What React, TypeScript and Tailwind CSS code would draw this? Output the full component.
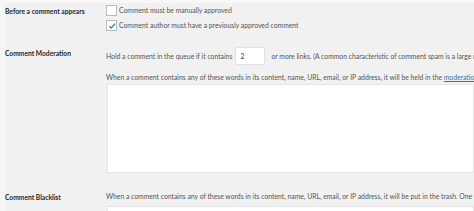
export default function App() {
  return (
    <div
      className="w-[474px] h-[211px] overflow-hidden bg-[#f1f1f1] text-[#555] text-[6.8px] border-t-[3px] border-[#f7f7f7]"
      style={{ fontFamily: 'Lato, "Open Sans", sans-serif' }}
    >
      <div className="flex h-full border-l-[5px] border-[#f6f6f6]">
        {/* label column */}
        <div className="w-[101px] shrink-0 flex flex-col text-[#23282d] font-bold whitespace-nowrap pt-[2px] text-[6.7px]">
          <div className="h-[12px] leading-[12px] shrink-0">Before a comment appears</div>
          <div className="h-[30px] shrink-0" />
          <div className="h-[12px] leading-[12px] shrink-0">Comment Moderation</div>
          <div className="h-[132px] shrink-0" />
          <div className="h-[12px] leading-[12px] shrink-0">Comment Blacklist</div>
        </div>

        {/* settings column */}
        <div className="flex-1 min-w-0 flex flex-col whitespace-nowrap">
          <label className="flex items-center h-[11px] mt-[2px] shrink-0">
            <span className="w-[11px] h-[11px] bg-white border border-[#bbb] shrink-0" />
            <span className="ml-[2px]">Comment must be manually approved</span>
          </label>
          <label className="flex items-center h-[11px] mt-[4px] shrink-0">
            <span className="w-[11px] h-[11px] bg-white border border-[#bbb] shrink-0 flex items-center justify-center">
              <svg viewBox="0 0 10 10" className="w-[8px] h-[8px]">
                <path d="M1.5 5.2 L4 7.6 L8.6 2.2" fill="none" stroke="#1e8cbe" strokeWidth="1.6" />
              </svg>
            </span>
            <span className="ml-[2px]">Comment author must have a previously approved comment</span>
          </label>

          <div className="flex items-center mt-[16px] h-[18px] shrink-0">
            <span>Hold a comment in the queue if it contains</span>
            <span className="ml-[3px] w-[30px] h-[18px] bg-white border border-[#e2e2e2] text-[#333] pl-[4px] leading-[16px] shrink-0">2</span>
            <span className="ml-[6px]">or more links. (A common characteristic of comment spam is a large number of hyperlinks.)</span>
          </div>
          <div className="mt-[6px] leading-[12px] shrink-0">
            When a comment contains any of these words in its content, name, URL, email, or IP address, it will be held in the{' '}
            <span className="text-[#3b72a8] underline">moderation queue</span>. One word or IP address per line.
          </div>
          <div className="mt-[1px] h-[89px] bg-white border border-[#e6e6e6] ml-[1px] shrink-0" />

          <div className="mt-[17px] leading-[12px] shrink-0">
            When a comment contains any of these words in its content, name, URL, email, or IP address, it will be put in the trash. One word or IP address per line.
          </div>
          <div className="mt-[4px] h-[20px] bg-white border border-[#e6e6e6] ml-[1px] shrink-0" />
        </div>
      </div>
    </div>
  );
}
